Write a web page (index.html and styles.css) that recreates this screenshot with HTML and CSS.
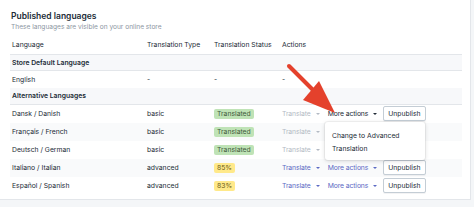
FILE: index.html
```html
<html>
	<head>
		<title>Published languages</title>
		<link rel="stylesheet" href="styles.css">
	</head>
	<body>
		<div class="card">
			<h2>Published languages</h2>
			<p class="sub">These languages are visible on your online store</p>
			<table class="langs">
				<colgroup>
					<col class="c-lang">
					<col class="c-type">
					<col class="c-status">
					<col class="c-actions">
				</colgroup>
				<thead>
					<tr>
						<th>Language</th>
						<th>Translation Type</th>
						<th>Translation Status</th>
						<th>Actions</th>
					</tr>
				</thead>
				<tbody>
					<tr class="section"><td colspan="4">Store Default Language</td></tr>
					<tr>
						<td>English</td>
						<td>-</td>
						<td>-</td>
						<td>-</td>
					</tr>
					<tr class="section"><td colspan="4">Alternative Languages</td></tr>
					<tr>
						<td>Dansk / Danish</td>
						<td>basic</td>
						<td><span class="badge done">Translated</span></td>
						<td class="acts">
							<span class="link off">Translate<span class="caret"></span></span>
							<span class="link hot">More actions<span class="caret"></span></span>
							<button>Unpublish</button>
						</td>
					</tr>
					<tr class="odd">
						<td>Français / French</td>
						<td>basic</td>
						<td><span class="badge done">Translated</span></td>
						<td class="acts">
							<span class="link off">Translate<span class="caret"></span></span>
						</td>
					</tr>
					<tr>
						<td>Deutsch / German</td>
						<td>basic</td>
						<td><span class="badge done">Translated</span></td>
						<td class="acts">
							<span class="link off">Translate<span class="caret"></span></span>
						</td>
					</tr>
					<tr class="odd">
						<td>Italiano / Italian</td>
						<td>advanced</td>
						<td><span class="badge part">85%</span></td>
						<td class="acts">
							<span class="link">Translate<span class="caret"></span></span>
							<span class="link">More actions<span class="caret"></span></span>
							<button>Unpublish</button>
						</td>
					</tr>
					<tr>
						<td>Español / Spanish</td>
						<td>advanced</td>
						<td><span class="badge part">83%</span></td>
						<td class="acts">
							<span class="link">Translate<span class="caret"></span></span>
							<span class="link">More actions<span class="caret"></span></span>
							<button>Unpublish</button>
						</td>
					</tr>
				</tbody>
			</table>

			<div class="menu">
				<div class="item">Change to Advanced Translation</div>
			</div>

			<svg class="arrow" width="60" height="60" viewBox="0 0 60 60">
				<line x1="9" y1="6" x2="36" y2="33" stroke="#e4412c" stroke-width="4" stroke-linecap="round"/>
				<polygon points="39,21 55,53 23,40" fill="#e4412c"/>
			</svg>
		</div>
	</body>
</html>
```

FILE: styles.css
```css
body {
	margin: 0;
	background: #f4f6f8;
	font-family: Inter, "Liberation Sans", sans-serif;
	color: #212b36;
	width: 474px;
	height: 207px;
	overflow: hidden;
}

.card {
	position: relative;
	width: 471px;
	height: 200px;
	padding: 0 8px 0 10px;
	background: #fff;
	border-right: 1px solid #e3e6ea;
	border-bottom: 1px solid #e3e6ea;
	box-sizing: border-box;
}

h2 {
	margin: 0;
	padding-top: 11px;
	font-size: 8.5px;
	font-weight: 600;
	line-height: 11px;
	padding-left: 1px;
}

.sub {
	margin: 0;
	font-size: 6.6px;
	line-height: 10px;
	color: #8c969f;
	padding-left: 1px;
}

table.langs {
	margin-top: 4px;
	width: 452px;
	border-collapse: collapse;
	table-layout: fixed;
	font-size: 6.8px;
}

col.c-lang { width: 135px; }
col.c-type { width: 67px; }
col.c-status { width: 68px; }

th, td {
	text-align: left;
	padding: 0 2px;
	height: 18px;
	white-space: nowrap;
	vertical-align: middle;
}

th {
	font-weight: 400;
	border-bottom: 1px solid #e3e6ea;
}

tr.section td {
	background: #f7f8fa;
	font-weight: 600;
	height: 16px;
	border-bottom: 1px solid #e3e6ea;
}

tr.odd td {
	background: #f9fafb;
}

.badge {
	display: inline-block;
	padding: 0 3px;
	line-height: 10px;
	border-radius: 2px;
}

.badge.done {
	background: #bfe3b6;
	color: #3f5a3c;
}

.badge.part {
	background: #ffe98a;
	color: #6b5a18;
}

.acts {
	display: flex;
	align-items: center;
}

.link {
	color: #5c6ac4;
	margin-right: 8px;
	letter-spacing: -0.1px;
}

.link.off {
	color: #b3bac4;
}

.link.hot {
	color: #212b36;
}

.caret {
	display: inline-block;
	width: 0;
	height: 0;
	margin-left: 5px;
	vertical-align: middle;
	border-left: 2px solid transparent;
	border-right: 2px solid transparent;
	border-top: 2.5px solid currentColor;
}

button {
	font-family: inherit;
	font-size: 6.8px;
	color: #212b36;
	background: #fff;
	border: 1px solid #c4cdd5;
	border-radius: 2px;
	height: 15px;
	padding: 0 4px;
	margin-left: -2px;
	box-shadow: 0 1px 0 rgba(22, 29, 37, 0.05);
}

.menu {
	position: absolute;
	left: 325px;
	top: 122px;
	width: 100px;
	height: 38px;
	background: #fff;
	border-radius: 3px;
	box-shadow: 0 0 0 1px rgba(63, 63, 68, 0.05), 0 1px 4px rgba(63, 63, 68, 0.2);
	box-sizing: border-box;
	padding: 7px 7px;
}

.item {
	font-size: 6.8px;
	line-height: 13px;
	white-space: normal;
	width: 70px;
}

.arrow {
	position: absolute;
	left: 280px;
	top: 60px;
}
```
